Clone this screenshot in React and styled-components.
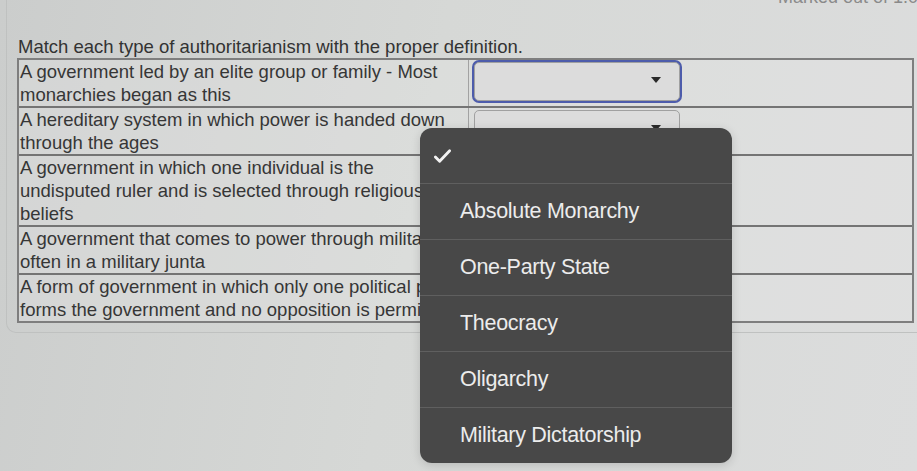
import React from 'react';
import styled, { createGlobalStyle } from 'styled-components';

// each definition is laid out in the lines the quiz shows
const rows = [
  ['A government led by an elite group or family - Most', 'monarchies began as this'],
  ['A hereditary system in which power is handed down', 'through the ages'],
  ['A government in which one individual is the', 'undisputed ruler and is selected through religious', 'beliefs'],
  ['A government that comes to power through military force,', 'often in a military junta'],
  ['A form of government in which only one political party', 'forms the government and no opposition is permitted'],
];

const options = ['Absolute Monarchy', 'One-Party State', 'Theocracy', 'Oligarchy', 'Military Dictatorship'];

const App = () => {
  return (
    <>
      <GlobalStyle />
      <Page>
        <Panel>
          <Marked>Marked out of 1.00</Marked>
          <Prompt>Match each type of authoritarianism with the proper definition.</Prompt>
          <Table>
            {rows.map((lines, i) => (
              <Row key={i}>
                <Definition>
                  {lines.map((l) => (
                    <Line key={l}>{l}</Line>
                  ))}
                </Definition>
                <Answer>
                  <Select focused={i === 0}>
                    <Arrow />
                  </Select>
                </Answer>
              </Row>
            ))}
          </Table>
        </Panel>
        <Menu>
          <MenuItem>
            <Check viewBox="0 0 20 16">
              <path d="M2.5 9l4.5 4.5L17.5 2.5" />
            </Check>
          </MenuItem>
          {options.map((o) => (
            <MenuItem key={o}>
              <MenuLabel>{o}</MenuLabel>
            </MenuItem>
          ))}
        </Menu>
      </Page>
    </>
  );
};

const GlobalStyle = createGlobalStyle`
  body {
    margin: 0;
    font-family: "Liberation Sans", Arial, sans-serif;
    background: linear-gradient(100deg, #cbcdcc 0%, #d6d8d6 45%, #dcdddd 100%);
  }
`;

const Page = styled.div`
  position: relative;
  height: 471px;
  overflow: hidden;
  padding-left: 6px;
  box-sizing: border-box;
`;

const Panel = styled.div`
  margin-top: -12px;
  padding: 0 3px 9px 10px;
  border: 1px solid #bfc1c0;
  border-top: none;
  border-right: none;
  border-bottom-left-radius: 10px;
`;

const Marked = styled.div`
  margin-right: -14px;
  text-align: right;
  font-size: 18px;
  line-height: 18px;
  color: #8a8a8a;
  white-space: nowrap;
`;

const Prompt = styled.div`
  margin-top: 31px;
  margin-left: 1px;
  font-size: 18.5px;
  line-height: 20px;
  color: #333;
`;

const Table = styled.div`
  margin-top: 1px;
  border: 2px solid #7e7e7e;
  background: rgba(232, 232, 232, 0.3);
`;

const Row = styled.div`
  display: grid;
  grid-template-columns: 449px 1fr;
  border-top: 2px solid #747474;
  &:first-child {
    border-top: none;
  }
`;

const Definition = styled.div`
  padding-left: 1px;
  font-size: 18.5px;
  line-height: 23px;
  color: #363636;
`;

const Line = styled.div`
  white-space: nowrap;
`;

const Answer = styled.div`
  border-left: 1px solid #a2a2a2;
  padding: 2px 5px;
`;

const Select = styled.div`
  position: relative;
  width: 204px;
  height: 37px;
  border-radius: 5px;
  border: 1px solid #a0a0a0;
  background: #dcdcdc;
  box-shadow: ${(p) => (p.focused ? '0 0 0 2px #4d5cab' : 'none')};
`;

const Arrow = styled.span`
  position: absolute;
  right: 18px;
  top: 14px;
  width: 0;
  height: 0;
  border-left: 5px solid transparent;
  border-right: 5px solid transparent;
  border-top: 6px solid #2a2a2a;
`;

const Menu = styled.div`
  position: absolute;
  left: 420px;
  top: 128px;
  width: 312px;
  border-radius: 12px;
  background: #484848;
  overflow: hidden;
  box-shadow: 0 2px 10px rgba(0, 0, 0, 0.15);
`;

const MenuItem = styled.div`
  height: 55px;
  display: flex;
  align-items: center;
  padding-left: 40px;
  border-top: 1px solid #5f5f5f;
  &:first-child {
    border-top: none;
    padding-left: 13px;
  }
`;

const MenuLabel = styled.span`
  font-size: 21.5px;
  color: #ececec;
  letter-spacing: -0.3px;
`;

const Check = styled.svg`
  width: 19px;
  height: 16px;
  fill: none;
  stroke: #f2f2f2;
  stroke-width: 3;
  stroke-linecap: round;
  stroke-linejoin: round;
`;

export default App;
